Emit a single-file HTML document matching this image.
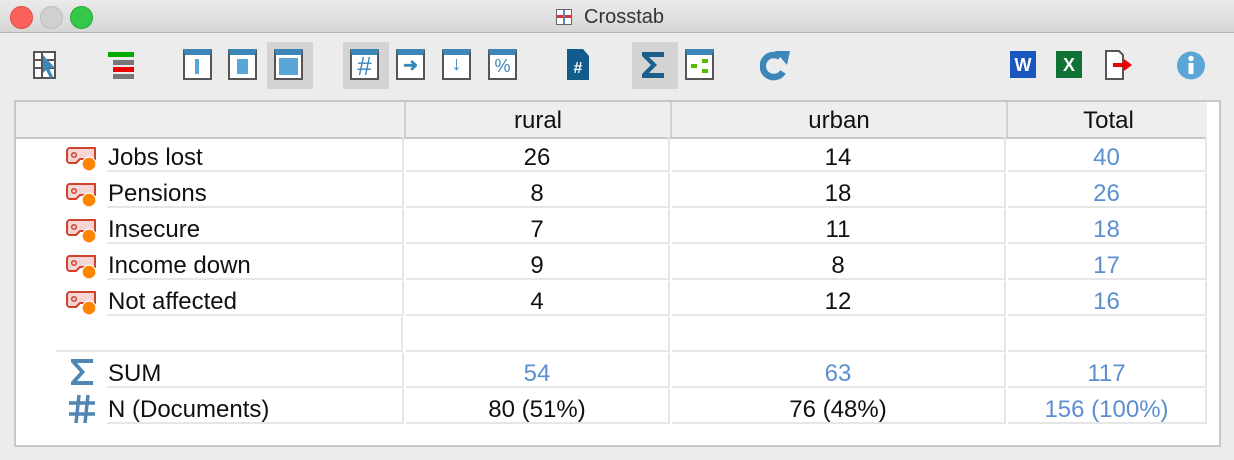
<!DOCTYPE html>
<html><head><style>
body{margin:0;width:1234px;height:460px;background:#ececec;font-family:"Liberation Sans",sans-serif;position:relative;overflow:hidden}
.tb{position:absolute;left:0;top:0;width:1234px;height:32px;background:linear-gradient(#ebebeb,#d6d6d6);border-bottom:1px solid #b5b5b5}
.dot{position:absolute;top:6px;width:21px;height:21px;border-radius:50%}
.ab{position:absolute}
.title{position:absolute;left:584px;top:6px;font-size:20px;color:#333}
.sel{position:absolute;top:42px;width:46px;height:47px;background:#d4d4d4}
.win{position:absolute;width:29px;height:31px;top:49px;box-sizing:border-box;border:2px solid #555;border-top:6px solid #3d86b8;background:#fff}
.panel{position:absolute;left:14px;top:100px;width:1203px;height:343px;background:#fff;border:2px solid #c8c8c8}
.hdr{position:absolute;left:0;top:0;width:1191px;height:35px;background:#eeeeee;border-bottom:2px solid #c8c8c8}
.hc{position:absolute;top:0;height:35px;line-height:38px;text-align:center;font-size:24px;color:#111;border-left:2px solid #d0d0d0}
.cell{position:absolute;height:33px;border-bottom:2px solid #e6e6e6;border-right:2px solid #e6e6e6;font-size:24px;line-height:42px;text-align:center;color:#111;box-sizing:content-box}
.lbl{text-align:left;padding-left:1px}
.blue{color:#5b8fcf}
.tag{position:absolute;width:32px;height:26px}
.g{position:absolute;color:#3d86b8;text-align:center;width:25px;left:0}
</style></head><body>
<div class="tb"></div>
<div class="dot" style="left:10px;background:#fc605b;border:1px solid #de4a44"></div>
<div class="dot" style="left:40px;background:#d0d0d0;border:1px solid #bcbcbc"></div>
<div class="dot" style="left:70px;background:#34c84a;border:1px solid #28a63a"></div>
<svg class="ab" style="left:556px;top:9px" width="16" height="16"><rect x=".5" y=".5" width="15" height="15" fill="#fff" stroke="#666"/><rect x="1" y="6" width="14" height="3" fill="#d33"/><rect x="7" y="1" width="2" height="14" fill="#58c"/></svg>
<div class="title">Crosstab</div>

<svg class="ab" style="left:33px;top:51px" width="26" height="30"><rect x="1" y="1" width="21" height="26" fill="#fff" stroke="#555" stroke-width="2"/><path d="M1 9H22M1 17H22M9 1V27" stroke="#555" stroke-width="2"/><path d="M10 4L22 17L16 17L20 26L17 27L13 19L10 22Z" fill="#3d86b8"/></svg>
<svg class="ab" style="left:108px;top:51px" width="27" height="30"><rect x="0" y="1" width="26" height="5" fill="#0a0"/><rect x="5" y="9" width="21" height="5" fill="#777"/><rect x="5" y="16" width="21" height="5" fill="#e00"/><rect x="5" y="23" width="21" height="5" fill="#777"/></svg>
<div class="sel" style="left:267px"></div>
<div class="sel" style="left:343px"></div>
<div class="sel" style="left:632px"></div>
<div class="win" style="left:183px"><div style="position:absolute;left:10px;top:4px;width:4px;height:15px;background:#5aa6d6"></div></div>
<div class="win" style="left:228px"><div style="position:absolute;left:7px;top:4px;width:11px;height:15px;background:#5aa6d6"></div></div>
<div class="win" style="left:274px"><div style="position:absolute;left:3px;top:3px;width:19px;height:17px;background:#5aa6d6"></div></div>
<div class="win" style="left:350px"><div class="g" style="top:-4px;font-size:26px">#</div></div>
<div class="win" style="left:396px"><div class="g" style="top:0px;font-size:18px;font-weight:bold">➜</div></div>
<div class="win" style="left:442px"><div class="g" style="top:-2px;font-size:20px;font-weight:bold">↓</div></div>
<div class="win" style="left:488px"><div class="g" style="top:1px;font-size:18px">%</div></div>
<svg class="ab" style="left:567px;top:49px" width="23" height="31"><path d="M0 0H16L22 7V31H0Z" fill="#125c8c"/><text x="11" y="24" font-size="16" fill="#fff" text-anchor="middle" font-family="Liberation Sans" font-weight="bold">#</text></svg>
<svg class="ab" style="left:640px;top:50px" width="26" height="30"><path d="M2 2H24V7H9L17 15L9 23H24V28H2V24L11 15L2 6Z" fill="#1c5f8c"/></svg>
<div class="win" style="left:685px"><div style="position:absolute;left:4px;top:9px;width:6px;height:4px;background:#5b0"></div><div style="position:absolute;left:15px;top:4px;width:6px;height:4px;background:#5b0"></div><div style="position:absolute;left:15px;top:14px;width:6px;height:4px;background:#5b0"></div></div>
<svg class="ab" style="left:760px;top:49px" width="32" height="32"><path d="M23 23A11 11 0 1 1 20 8" fill="none" stroke="#3d86b8" stroke-width="6.5"/><path d="M15 2L30 2L27 16Z" fill="#3d86b8"/></svg>
<div class="ab" style="left:1010px;top:51px;width:26px;height:27px;background:#1a56c0;color:#fff;font-weight:bold;font-size:18px;text-align:center;line-height:28px">W</div>
<div class="ab" style="left:1056px;top:51px;width:26px;height:27px;background:#107235;color:#fff;font-weight:bold;font-size:18px;text-align:center;line-height:28px">X</div>
<svg class="ab" style="left:1105px;top:50px" width="28" height="30"><path d="M1 1H14L18 5V29H1Z" fill="#fff" stroke="#555" stroke-width="2"/><path d="M8 15H20" stroke="#e00" stroke-width="4"/><path d="M19 9L27 15L19 21Z" fill="#e00"/></svg>
<svg class="ab" style="left:1176px;top:51px" width="30" height="29"><ellipse cx="15" cy="14.5" rx="14" ry="14" fill="#5aa6d6"/><circle cx="15" cy="7.5" r="2.7" fill="#fff"/><rect x="12.5" y="12" width="5" height="11" fill="#fff"/></svg>

<div class="panel">
<div class="hdr"></div>
<div class="hc" style="left:388px;width:264px">rural</div>
<div class="hc" style="left:654px;width:334px">urban</div>
<div class="hc" style="left:990px;width:201px">Total</div>
</div>
<div id="rows"></div>
<script>
const rows=[["Jobs lost","26","14","40","t"],["Pensions","8","18","26","t"],["Insecure","7","11","18","t"],["Income down","9","8","17","t"],["Not affected","4","12","16","t"],["","","","",""],["SUM","54","63","117","s"],["N (Documents)","80 (51%)","76 (48%)","156 (100%)","n"]];
let h="";
rows.forEach((r,i)=>{const y=137+i*36;
if(r[4]=="")h+=`<div class="cell lbl" style="left:56px;top:${y}px;width:293px;padding-left:52px"></div>`;
else h+=`<div class="cell lbl" style="left:107px;top:${y}px;width:294px">${r[0]}</div>`;
const blue=r[4]=="s";
h+=`<div class="cell ${blue?'blue':''}" style="left:406px;top:${y}px;width:262px">${r[1]}</div>`;
h+=`<div class="cell ${blue?'blue':''}" style="left:672px;top:${y}px;width:332px">${r[2]}</div>`;
h+=`<div class="cell blue" style="left:1008px;top:${y}px;width:197px">${r[3]}</div>`;
if(r[4]=="t")h+=`<svg class="tag" style="left:66px;top:${y+9}px" viewBox="0 0 32 26"><path d="M4 2H29V13H14L10 17H4A3 3 0 0 1 1 14V5A3 3 0 0 1 4 2Z" fill="#f6d6d4" stroke="#d24030" stroke-width="2"/><circle cx="8" cy="9" r="2.3" fill="none" stroke="#d24030" stroke-width="1.5"/><circle cx="23" cy="18" r="7.5" fill="#fff"/><circle cx="23" cy="18" r="6.3" fill="#ff8400"/></svg>`;
if(r[4]=="s")h+=`<svg class="ab" style="left:70px;top:${y+5}px" width="25" height="28"><path d="M1 1H23V5H7L15 14L7 23H23V27H1V24L10 14L1 4Z" fill="#4f86b3"/></svg>`;
if(r[4]=="n")h+=`<svg class="ab" style="left:67px;top:${y+4}px" width="30" height="31"><path d="M2 10H28M2 21H28M12 2L9 30M21 2L18 30" stroke="#4f86b3" stroke-width="3.5"/></svg>`;
});
document.getElementById("rows").innerHTML=h;
</script>
</body></html>
